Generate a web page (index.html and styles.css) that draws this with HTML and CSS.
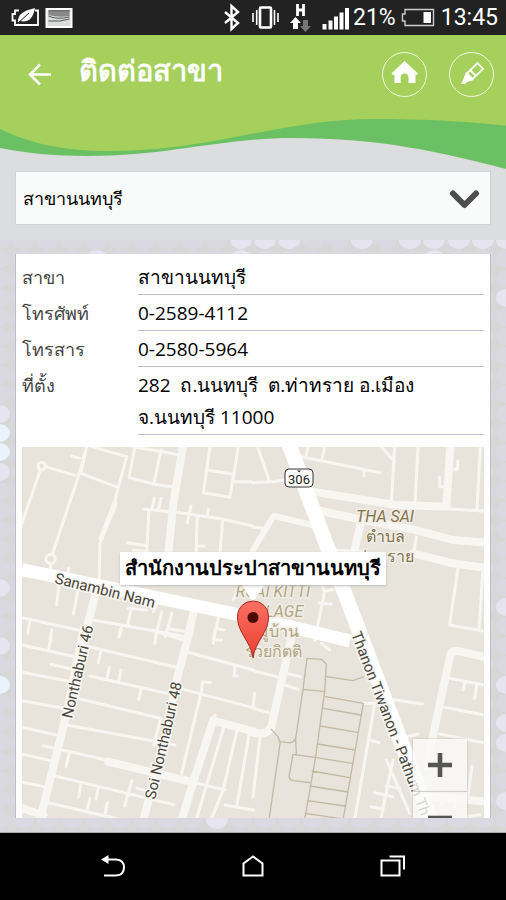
FILE: index.html
```html
<!DOCTYPE html>
<html lang="th">
<head>
<meta charset="utf-8">
<meta name="viewport" content="width=device-width, initial-scale=1">
<title>ติดต่อสาขา</title>
<link rel="stylesheet" href="styles.css">
</head>
<body>
<div class="status">
  <svg class="status-left" width="64" height="24" viewBox="10 6 64 24" aria-hidden="true">
    <path d="M19 10.500H15V14H12.500V20.500H15V25H38V10.500H35" fill="none" stroke="#fff" stroke-width="1.800"/>
    <path d="M18 24C17 14 23 11 35 8C33 18 29 23 20 21Z" fill="#fff"/>
    <path d="M18 23L29 13" stroke="#222" stroke-width="1"/>
    <rect x="46.500" y="9" width="25" height="18" fill="#d9dcda" stroke="#fff" stroke-width="2"/>
    <path d="M48.500 11H69.500V16Q60 18 48.500 15Z" fill="#888"/>
    <path d="M48.500 16Q57 20 69.500 17M48.500 21Q60 22 69.500 19M48.500 10.700H70" fill="none" stroke="#555" stroke-width="1"/>
  </svg>
  <svg class="status-mid" width="134" height="32" viewBox="218 2 134 32" aria-hidden="true">
    <path d="M224 12L237 23L230.500 29V6L237 12L224 23" fill="none" stroke="#fff" stroke-width="2.400"/>
    <rect x="259" y="7.500" width="11" height="20" rx="1" fill="none" stroke="#fff" stroke-width="2.600"/>
    <path d="M255.700 10V25M273.500 10V25M252 13V22M277 13V22" stroke="#fff" stroke-width="1.600"/>
    <path d="M296.500 4V16M302.500 4V16M296 10H303" stroke="#fff" stroke-width="2.800"/>
    <path d="M294.500 17L300 23H297V29H292V23H289Z" fill="#fff"/>
    <path d="M304.500 32L299 26H302V20H307V26H310Z" fill="#777"/>
    <path d="M321.500 29.500H325.500V24H321.500ZM327.500 29.500H331.500V20.500H327.500ZM333 29.500H337V16.500H333ZM338.500 29.500H342.500V12.500H338.500ZM344 29.500H348V8H344Z" fill="#fff"/>
  </svg>
  <span>21%</span>
  <svg class="battery" width="34" height="20" viewBox="401 8 34 20" aria-hidden="true">
    <path d="M405 9.500H433.500V25.500H405V21H402.500V14H405Z" fill="none" stroke="#ccc" stroke-width="1.400"/>
    <path d="M423.500 12H431V23H423.500Z" fill="#fff"/>
  </svg>
  <span class="clock">13:45</span>
</div>

<header class="header">
  <svg class="wave" viewBox="0 35 506 135" preserveAspectRatio="none" aria-hidden="true">
    <path d="M0 35H506V169C440 152 380 138 293 138C220 138 170 156 87 156C54 156 25 153 0 148Z" fill="#6bc063"/>
    <path d="M0 35H506V125.500C460 121 420 119 375 119C280 119 215 151 110 151C60 151 30 143 0 129Z" fill="#a5d05c"/>
  </svg>
  <div class="bar">
    <a class="back" href="#" aria-label="กลับ">
      <svg width="24" height="24" viewBox="27 62 24 24"><path d="M51 74.500H30M40 64.500L30 74.500L40 84.500" fill="none" stroke="#fff" stroke-width="2.600"/></svg>
    </a>
    <h1 class="title">ติดต่อสาขา</h1>
    <button class="round" type="button" aria-label="หน้าแรก">
      <svg width="28" height="28" viewBox="391 60 28 28"><path d="M404.500 61L418 73.500L416.500 75L415.500 74.500V83H408.500V76.500Q407.500 73.500 404.500 73.500Q401.500 73.500 400.700 76.500V83H394.500V74.500L393 75L391.500 73.500Z" fill="#fff"/></svg>
    </button>
    <button class="round" type="button" aria-label="แก้ไข">
      <svg width="28" height="28" viewBox="458 60 28 28"><path d="M467 73.500L477.500 63L483 69L472.500 79Z" fill="none" stroke="#fff" stroke-width="1.800"/><path d="M470 70L476 76" stroke="#fff" stroke-width="1.800"/><path d="M466 72L474 80L467 82L465 84L461 84L463 80Z" fill="#fff"/></svg>
    </button>
  </div>
  <div class="picker">
    <select class="select" aria-label="เลือกสาขา"><option>สาขานนทบุรี</option></select>
    <svg class="chevron" width="32" height="22" viewBox="448 188 32 22" aria-hidden="true"><path d="M453 193.500L464.500 205L476 193.500" fill="none" stroke="#4d4d4d" stroke-width="6" stroke-linecap="round" stroke-linejoin="round"/></svg>
  </div>
</header>

<main class="main">
  <svg class="dots" viewBox="0 240 506 592" preserveAspectRatio="xMidYMin slice" aria-hidden="true">
    <defs>
      <pattern id="dot" x="11" y="230.400" width="24.200" height="19.300" patternUnits="userSpaceOnUse"><ellipse cx="12.100" cy="9.650" rx="11" ry="9" fill="#dad9e1"/></pattern>
    </defs>
    <path d="M0 240H506V832H0Z" fill="#d7d7d7"/>
    <path d="M0 240H506V832H0Z" fill="url(#dot)"/>
    <g fill="#e5e4f0">
      <ellipse cx="241" cy="240" rx="11" ry="9"/><ellipse cx="265" cy="240" rx="11" ry="9"/><ellipse cx="289" cy="240" rx="11" ry="9"/>
      <ellipse cx="362" cy="240" rx="11" ry="9"/><ellipse cx="410" cy="240" rx="11" ry="9"/><ellipse cx="434" cy="240" rx="11" ry="9"/>
      <ellipse cx="459" cy="240" rx="11" ry="9"/><ellipse cx="483" cy="240" rx="11" ry="9"/><ellipse cx="507" cy="240" rx="11" ry="9"/>
      <ellipse cx="97" cy="259" rx="11" ry="9"/><ellipse cx="241" cy="259" rx="11" ry="9"/><ellipse cx="434" cy="259" rx="11" ry="9"/>
      <ellipse cx="507" cy="298" rx="11" ry="9"/><ellipse cx="507" cy="607" rx="11" ry="9"/><ellipse cx="507" cy="685" rx="11" ry="9"/>
      <ellipse cx="507" cy="723" rx="11" ry="9"/><ellipse cx="507" cy="743" rx="11" ry="9"/><ellipse cx="507" cy="801" rx="11" ry="9"/>
      <ellipse cx="-1" cy="414" rx="11" ry="9"/><ellipse cx="-1" cy="472" rx="11" ry="9"/><ellipse cx="-1" cy="588" rx="11" ry="9"/>
      <ellipse cx="-1" cy="646" rx="11" ry="9"/><ellipse cx="217" cy="820" rx="11" ry="9"/>
    </g>
    <g fill="#eaf3fb"><ellipse cx="-1" cy="433" rx="11" ry="9"/><ellipse cx="-1" cy="452" rx="11" ry="9"/><ellipse cx="-1" cy="685" rx="11" ry="9"/></g>
  </svg>

  <section class="card">
    <dl class="info">
      <dt>สาขา</dt><dd>สาขานนทบุรี</dd>
      <dt>โทรศัพท์</dt><dd>0-2589-4112</dd>
      <dt>โทรสาร</dt><dd>0-2580-5964</dd>
      <dt>ที่ตั้ง</dt><dd>282&nbsp; ถ.นนทบุรี&nbsp; ต.ท่าทราย อ.เมือง<br>จ.นนทบุรี 11000</dd>
    </dl>
    <div class="map">
      <svg class="map-art" viewBox="22 447 462 371" preserveAspectRatio="xMidYMid slice" role="img" aria-label="แผนที่">
        <defs>
          <linearGradient id="pin" x1="0" y1="0" x2="0" y2="1"><stop offset="0" stop-color="#fb7064"/><stop offset="1" stop-color="#e9402f"/></linearGradient>
          <clipPath id="nw"><path d="M0 0H759V600H0Z"/></clipPath>
        </defs>
        <path d="M22 447H484V818H22Z" fill="#e8e4dc"/>
        <!-- north-west quarter -->
        <g class="road" transform="translate(0 440) scale(.33333)" clip-path="url(#nw)">
          <path class="mid" d="M552 0L520 190L500 390M290 450L245 620M580 520L556 620"/>
          <path d="M260 20L235 110L158 340M240 55L215 48M137 80L225 106M120 92L66 250M275 20L380 50L345 180L300 295M258 30L243 100L347 140M347 180Q350 200 335 225L300 310L297 420M405 20L387 112L460 132L522 142M400 20L540 45M483 30L462 130M630 20L610 158L690 172L715 20M620 90L695 102M698 125H760M432 207L540 218L670 238L760 258M463 175L456 205M483 175L476 205M447 210L440 335M382 308L440 317M400 330L440 335M573 198L562 248M625 208L622 226M592 230L588 340M592 318H612M668 240L660 340M152 370V390M206 385L204 400M177 430L170 495M238 430L220 522M66 533L245 572M90 540L84 580M155 570L150 600M395 500L382 560M385 505L440 510M280 540L560 590M364 560L356 590M485 515L465 600M516 520L496 590M460 515L480 470M510 567L550 573M655 535L640 600M650 565L672 570M760 320L700 480"/>
          <circle cx="125" cy="78" r="11"/><circle cx="152" cy="357" r="14"/>
        </g>
        <!-- north-east quarter -->
        <g class="road" transform="translate(253 440) scale(.33333)">
          <path class="mid" d="M180 155L420 194L580 200L592 20M190 210L330 240L480 268L600 300L700 308M480 340L600 370L700 384M325 240L305 330"/>
          <path d="M0 128L60 125L105 118M15 25L50 125M0 262L35 265M0 330L55 235Q65 220 85 228L190 258" />
          <path class="wide" d="M0 330L62 228L190 258"/>
          <path d="M145 50L382 98M333 90V108M215 20L208 55M165 20L160 45M425 20L415 190M385 20L425 65M495 20L486 195M615 62L613 88L600 88M560 110V140H572M682 20L672 210M590 207L692 213M490 290L484 330M615 385L590 555L700 575M690 385L678 570M250 330L330 335M215 455L185 600M200 490L235 492M215 455L240 448M215 455L205 430"/>
        </g>
        <!-- south-west quarter -->
        <g class="road" transform="translate(0 630) scale(.33333)">
          <path class="mid" d="M250 0L200 250L120 570M570 0L530 150L490 350L430 570M640 270L580 455L545 570M640 272L760 304"/>
          <path class="mid" d="M325 395L580 457M66 535L130 555"/>
          <path d="M66 45L225 80M153 25L146 55M66 127L215 155M66 212L190 235M66 292L170 315M66 373L155 392M66 457L135 470M153 103L250 125M245 45L530 112M302 65L295 98M328 112L322 142M363 120L357 150M270 138L500 190M423 178L416 208M230 205L480 265M200 285L525 345M482 265L462 345M130 347L330 392M208 370L198 410M165 438L522 524M242 465L236 500M295 472L288 508M395 452L374 528M410 475L450 485M145 518L345 565M270 505L262 535M322 518L315 550M455 0L550 30M562 66L760 120M705 105L702 138H712M550 178L755 232M632 158L608 155L604 185L545 430M645 0L640 40M650 30H665M364 0L358 20M470 0L465 40M672 290L590 565M710 305L670 478L635 565M747 315L710 530M580 457L675 480M675 525L760 540M645 255L640 275"/>
        </g>
        <!-- south-east quarter -->
        <g class="road" transform="translate(253 630) scale(.33333)">
          <path class="mid" d="M120 0L55 290Q45 318 0 308M520 410L592 75Q598 58 620 64L700 82M490 495L700 515"/>
          <path d="M0 122L90 145M100 130L142 140M0 235L55 250M5 190L0 230M95 165L135 178M22 315L0 500M330 220H365L305 570M350 330L378 338M410 207L508 222M420 330L495 312M590 145L692 165M636 155L630 180M672 162L665 205M575 232L692 255M560 312L692 338M657 408L645 500M400 390L470 550M420 390L385 560M400 468L440 475M365 488L420 500M355 530L390 538M570 505L565 525M610 510L605 530M205 40L230 60M640 560L680 555"/>
          <g class="lot">
            <path d="M162 85L205 88L220 102L215 185L150 178ZM150 178L128 325Q122 340 105 338L80 335L75 320L55 298M82 335L48 570M215 185L188 380L155 570M218 200L331 220L270 570M210 235L325 255M202 288L313 307M193 342L305 360M186 382L298 400M178 423L290 443M170 468L285 486M163 512L275 528M157 550L270 567M220 140L300 152L332 140M185 382L120 373L108 440Q110 450 120 452L170 458M128 325L130 375"/>
          </g>
        </g>
        <path d="M22 569.500L250 617L350 641" fill="none" stroke="#fff" stroke-width="13"/>
        <path d="M287 439L322 533L430 818" fill="none" stroke="#fff" stroke-width="15"/>
        <g class="shield"><rect x="285" y="469" width="28" height="18" rx="4" fill="#fff" stroke="#333"/><path d="M297 470.500H301L299 472.500Z" fill="#333"/><text x="299" y="484">306</text></g>
        <g class="street">
          <text transform="translate(54 583) rotate(14)">Sanambin Nam</text>
          <text transform="translate(72 719) rotate(-77)">Nonthaburi 46</text>
          <text transform="translate(155 800) rotate(-77)">Soi Nonthaburi 48</text>
          <text transform="translate(351 634) rotate(69)">Thanon Tiwanon - Pathum Th</text>
        </g>
        <g class="place">
          <text x="385" y="522">THA SAI</text>
          <text class="thai" x="385" y="542">ตำบล</text>
          <text class="thai" x="385" y="562">ท่าทราย</text>
        </g>
        <g class="place soft">
          <text x="273" y="597">RUAI KITTI</text>
          <text x="273" y="617">VILLAGE</text>
          <text class="thai" x="273" y="637">หมู่บ้าน</text>
          <text class="thai" x="273" y="657">รวยกิตติ</text>
        </g>
        <path d="M241 584H265L253 602Z" fill="#fff"/>
        <rect class="callout" x="120" y="552" width="266" height="33" fill="#fff"/>
        <text class="callout-text" x="253" y="575">สำนักงานประปาสาขานนทบุรี</text>
        <path d="M253 658C251 641 237 633 237.500 616A15.500 15 0 0 1 268.500 616C269 633 255 641 253 658Z" fill="url(#pin)" stroke="#a92b22" stroke-width="1"/>
        <circle cx="253" cy="617.500" r="5.500" fill="#4c0b08"/>
      </svg>
      <div class="zoom">
        <button type="button" aria-label="ขยาย"><svg width="24" height="24" viewBox="0 0 24 24"><path d="M12 0V24M0 12H24" stroke="#555" stroke-width="4.600"/></svg></button>
        <button type="button" aria-label="ย่อ"><svg width="24" height="24" viewBox="0 0 24 24"><path d="M0 12H24" stroke="#555" stroke-width="4.600"/></svg></button>
      </div>
    </div>
  </section>
</main>

<nav class="nav">
  <button type="button" aria-label="ย้อนกลับ"><svg width="28" height="28" viewBox="99 853 28 28"><path d="M104 875.500H116Q124 875 124 867.500Q124 860 116 859.500H107" fill="none" stroke="#fff" stroke-width="2"/><path d="M101 859.500L108.500 855V864Z" fill="#fff"/></svg></button>
  <button type="button" aria-label="โฮม"><svg width="28" height="28" viewBox="239 853 28 28"><path d="M243.500 875.500V863.500L253 856.500L262.500 863.500V875.500Z" fill="none" stroke="#fff" stroke-width="2"/></svg></button>
  <button type="button" aria-label="แอปล่าสุด"><svg width="28" height="28" viewBox="380 853 28 28"><path d="M382.500 860.500H400.500V875.500H382.500ZM390.500 856.500H405V869.500" fill="none" stroke="#fff" stroke-width="2"/></svg></button>
</nav>
</body>
</html>
```
FILE: styles.css
```css
* {
  box-sizing: border-box;
}

body {
  margin: 0;
  min-height: 100vh;
  display: flex;
  flex-direction: column;
  background: #dcdddf;
  font-family: "Open Sans", "Noto Sans", sans-serif;
  color: #000;
}

svg {
  display: block;
}

button {
  padding: 0;
  border: 0;
  background: none;
  display: flex;
  align-items: center;
  justify-content: center;
}

.status {
  display: flex;
  align-items: center;
  height: 35px;
  padding: 0 8px 0 10px;
  background: #222;
  color: #fff;
  font: 23px/36px Roboto, sans-serif;
}

.status-mid {
  margin-left: auto;
}

.battery {
  margin: 0 6px 0 5px;
}

.header {
  position: relative;
  height: 205px;
}

.wave {
  position: absolute;
  inset: 0 0 auto;
  width: 100%;
  height: 135px;
}

.bar {
  position: relative;
  display: flex;
  align-items: center;
  height: 78px;
  padding: 0 12px 0 27px;
}

.title {
  flex: 1;
  margin: 0 0 8px 28px;
  color: #fff;
  font-size: 29px;
  line-height: 40px;
  font-weight: 700;
}

.round {
  width: 45px;
  height: 45px;
  border: 1px solid #f2f8e6;
  border-radius: 50%;
}

.round + .round {
  margin-left: 22px;
}

.picker {
  position: relative;
  margin: 58px 15px 0;
}

.select {
  width: 100%;
  height: 54px;
  padding: 0 7px;
  appearance: none;
  border: 1px solid #d2d3d4;
  border-radius: 0;
  background: #f9fbfa;
  color: #000;
  font: 18px/32px "Open Sans", "Noto Sans", sans-serif;
}

.chevron {
  position: absolute;
  right: 11px;
  top: 17px;
  pointer-events: none;
}

.main {
  position: relative;
  flex: 1;
  padding: 14px 15px;
  overflow: hidden;
  border-bottom: 1px solid #aaa;
}

.dots {
  position: absolute;
  inset: 0;
  width: 100%;
  height: 100%;
}

.card {
  position: relative;
  padding: 5px 6px 0;
  background: #fff;
  border: 1px solid #bcbccf;
  border-width: 0 1px;
}

.info {
  display: grid;
  grid-template-columns: 116px 1fr;
  margin: 0 0 12px;
  font-size: 19px;
  line-height: 32px;
}

.info dt {
  padding-top: 2px;
  color: #444;
  font-size: 18px;
}

.info dd {
  margin: 0;
  padding: 2px 0 1px;
  border-bottom: 1px solid #c0c0d6;
}

.map {
  position: relative;
  overflow: hidden;
}

.map-art {
  width: 100%;
  height: auto;
}

.road path,
.road circle {
  fill: none;
  stroke: #f7f6f2;
  stroke-width: 9;
  stroke-linecap: round;
  stroke-linejoin: round;
}

.road .mid {
  stroke-width: 24;
}

.road .wide {
  stroke-width: 18;
}

.road .lot path {
  stroke: #c4b9a2;
  stroke-width: 4;
}

.shield text {
  font: 13px Roboto, sans-serif;
  text-anchor: middle;
  fill: #222;
}

.street {
  font: 15px Roboto, sans-serif;
  fill: #48453b;
  stroke: #f7f6f2;
  stroke-width: 3px;
  paint-order: stroke;
}

.place {
  font: italic 16px Roboto, sans-serif;
  text-anchor: middle;
  fill: #83724a;
  stroke: #f1eee7;
  stroke-width: 3px;
  paint-order: stroke;
}

.place .thai {
  font: 16px "Noto Sans", sans-serif;
}

.soft {
  fill: #b3a482;
}

.callout {
  filter: drop-shadow(0 1px 1px #bbb);
}

.callout-text {
  font: 700 20px "Noto Sans", sans-serif;
  text-anchor: middle;
}

.zoom {
  position: absolute;
  right: 17px;
  bottom: -27px;
}

.zoom button {
  width: 54px;
  height: 53px;
  background: rgba(250, 250, 249, 0.8);
  border-bottom: 1px solid #d8d7d2;
  box-shadow: 0 0 2px #bbb;
}

.nav {
  display: flex;
  justify-content: center;
  align-items: center;
  gap: 112px;
  height: 67px;
  background: #000;
}
```
